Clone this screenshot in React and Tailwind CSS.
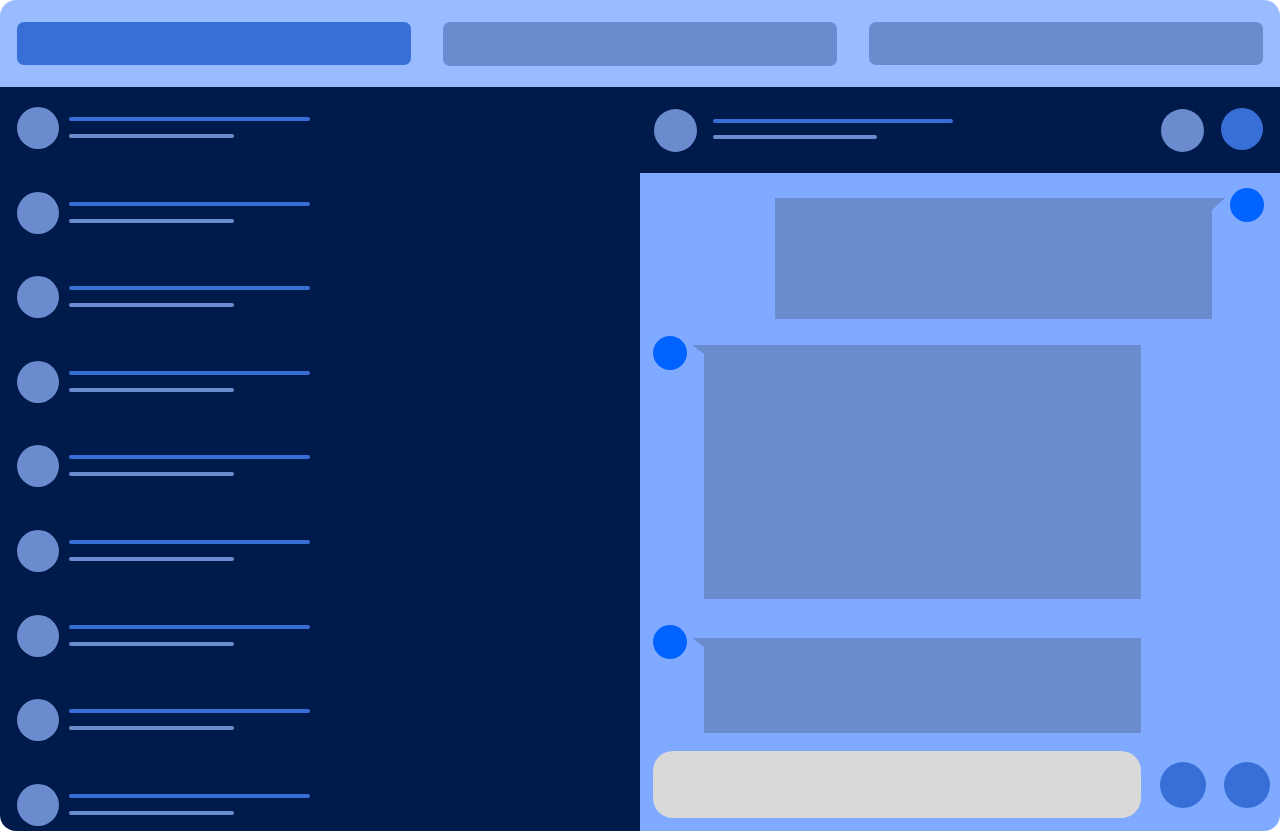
// App.jsx
import React from "react";

const contacts = Array.from({ length: 9 }, (_, i) => i);

const ContactRow = () => (
  <div className="flex items-start gap-[10px] shrink-0">
    <div className="w-[42px] h-[42px] rounded-full bg-[#6a8bcd]" />
    <div className="flex flex-col gap-[13px] pt-[10px]">
      <div className="w-[241px] h-1 rounded-full bg-[#386fd6]" />
      <div className="w-[165px] h-1 rounded-full bg-[#6a8bcd]" />
    </div>
  </div>
);

const Dot = () => <div className="w-[34px] h-[34px] rounded-full bg-[#0062ff] shrink-0" />;

// incoming bubble, tail on top-left
const InBubble = ({ height, top }) => (
  <div className="relative w-[437px] bg-[#6a8bcd]" style={{ height, marginTop: top }}>
    <div className="absolute top-0 -left-[12px] w-0 h-0 border-t-[9px] border-t-[#6a8bcd] border-l-[12px] border-l-transparent" />
  </div>
);

export default function App() {
  return (
    <div className="w-[1280px] h-[831px] bg-white">
      <div className="w-full h-full rounded-2xl overflow-hidden flex flex-col">
        {/* tabs */}
        <div className="h-[87px] shrink-0 bg-[#99bbff] flex gap-8 px-[17px] pt-[22px]">
          <div className="flex-1 h-[43px] rounded-[7px] bg-[#386fd6]" />
          <div className="flex-1 h-[44px] rounded-[7px] bg-[#6a8bcd]" />
          <div className="flex-1 h-[43px] rounded-[7px] bg-[#6a8bcd]" />
        </div>

        <div className="flex flex-1 min-h-0">
          {/* contact list */}
          <div className="w-[640px] shrink-0 bg-[#001a4b] flex flex-col gap-[42.6px] pl-[17px] pt-[20px] overflow-hidden">
            {contacts.map((i) => (
              <ContactRow key={i} />
            ))}
          </div>

          {/* chat */}
          <div className="flex-1 flex flex-col">
            <div className="h-[86px] shrink-0 bg-[#001a4b] flex items-start pl-[14px] pr-[17px] pt-[22px]">
              <div className="w-[43px] h-[43px] rounded-full bg-[#6a8bcd]" />
              <div className="flex flex-col gap-[12px] pt-[10px] ml-[16px]">
                <div className="w-[240px] h-1 rounded-full bg-[#386fd6]" />
                <div className="w-[164px] h-1 rounded-full bg-[#6a8bcd]" />
              </div>
              <div className="ml-auto flex gap-[17px]">
                <div className="w-[43px] h-[43px] rounded-full bg-[#6a8bcd]" />
                <div className="w-[42px] h-[42px] -mt-px rounded-full bg-[#386fd6]" />
              </div>
            </div>

            <div className="flex-1 bg-[#80aaff] flex flex-col pt-[15px]">
              {/* outgoing */}
              <div className="flex justify-end items-start gap-[18px] pr-[16px]">
                <div className="relative w-[437px] h-[121px] mt-[10px] bg-[#6a8bcd]">
                  <div className="absolute top-0 -right-[13px] w-0 h-0 border-t-[12px] border-t-[#6a8bcd] border-r-[13px] border-r-transparent" />
                </div>
                <Dot />
              </div>

              <div className="flex items-start gap-[17px] pl-[13px] mt-[17px]">
                <Dot />
                <InBubble height={254} top={9} />
              </div>

              <div className="flex items-start gap-[17px] pl-[13px] mt-[26px]">
                <Dot />
                <InBubble height={95} top={13} />
              </div>

              {/* composer */}
              <div className="flex items-center pl-[13px] mt-[18px]">
                <div className="w-[488px] h-[67px] rounded-[20px] bg-[#d9d9d9]" />
                <div className="w-[46px] h-[46px] rounded-full bg-[#386fd6] ml-[19px]" />
                <div className="w-[46px] h-[46px] rounded-full bg-[#386fd6] ml-[18px]" />
              </div>
            </div>
          </div>
        </div>
      </div>
    </div>
  );
}
